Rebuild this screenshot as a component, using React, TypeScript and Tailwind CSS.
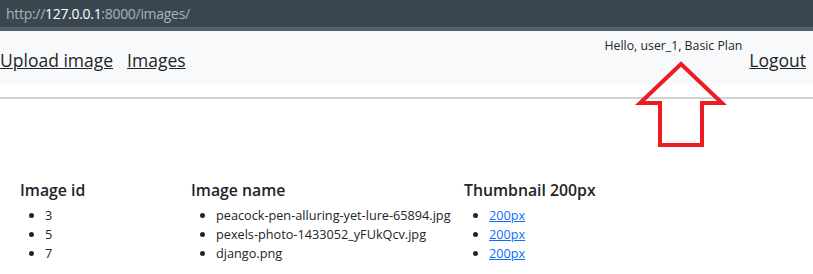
export default function App() {
  const ids = ["3", "5", "7"];
  const names = [
    "peacock-pen-alluring-yet-lure-65894.jpg",
    "pexels-photo-1433052_yFUkQcv.jpg",
    "django.png",
  ];
  return (
    <div
      className="relative w-[813px] h-[274px] overflow-hidden bg-white text-[#212529]"
      style={{ fontFamily: '"Open Sans", "Noto Sans", sans-serif' }}
    >
      {/* address bar */}
      <div className="h-[27px] bg-[#3b4750] flex items-center pl-[6px] text-[14px] tracking-[-0.3px]">
        <span className="text-[#a9b1b6]">http://</span>
        <span className="text-white">127.0.0.1</span>
        <span className="text-[#a9b1b6]">:8000/images/</span>
      </div>
      <div className="h-[4px] bg-[#56626b]" />

      {/* navbar */}
      <nav className="h-[54px] bg-[#f8f9fa] flex justify-between">
        <div className="flex gap-[14px] pt-[16px] text-[17.5px] leading-[26px]">
          <a href="#" className="underline text-[#212529]">Upload image</a>
          <a href="#" className="underline text-[#212529]">Images</a>
        </div>
        <div className="flex items-start pr-[7px]">
          <span className="pt-[7px] text-[12.3px] leading-[16px] mr-[7px]">Hello, user_1, Basic Plan</span>
          <a href="#" className="underline pt-[16px] text-[17.5px] leading-[26px] text-[#212529]">Logout</a>
        </div>
      </nav>

      <div className="mt-[12px] h-[2px] bg-[#d2d2d2]" />

      {/* table */}
      <div className="flex pl-[20px] pt-[80px]">
        <div className="w-[171px]">
          <h5 className="text-[15.8px] font-semibold leading-[22px]">Image id</h5>
          <ul className="list-disc pl-[25px] mt-[5px] text-[12.7px] leading-[19px]">
            {ids.map((id) => (
              <li key={id}>{id}</li>
            ))}
          </ul>
        </div>
        <div className="w-[273px]">
          <h5 className="text-[15.8px] font-semibold leading-[22px]">Image name</h5>
          <ul className="list-disc pl-[25px] mt-[5px] text-[12.7px] leading-[19px]">
            {names.map((n) => (
              <li key={n}>{n}</li>
            ))}
          </ul>
        </div>
        <div>
          <h5 className="text-[15.8px] font-semibold leading-[22px]">Thumbnail 200px</h5>
          <ul className="list-disc pl-[25px] mt-[5px] text-[12.7px] leading-[19px]">
            {ids.map((id) => (
              <li key={id}>
                <a href="#" className="underline text-[#0d6efd]">200px</a>
              </li>
            ))}
          </ul>
        </div>
      </div>

      {/* red arrow annotation */}
      <svg className="absolute left-0 top-0" width="813" height="274" viewBox="0 0 813 274">
        <polygon
          points="681,64 722,103 702,103 702,145 660,145 660,103 640,103"
          fill="none"
          stroke="#ed1c24"
          strokeWidth="4"
          strokeLinejoin="miter"
        />
      </svg>
    </div>
  );
}
